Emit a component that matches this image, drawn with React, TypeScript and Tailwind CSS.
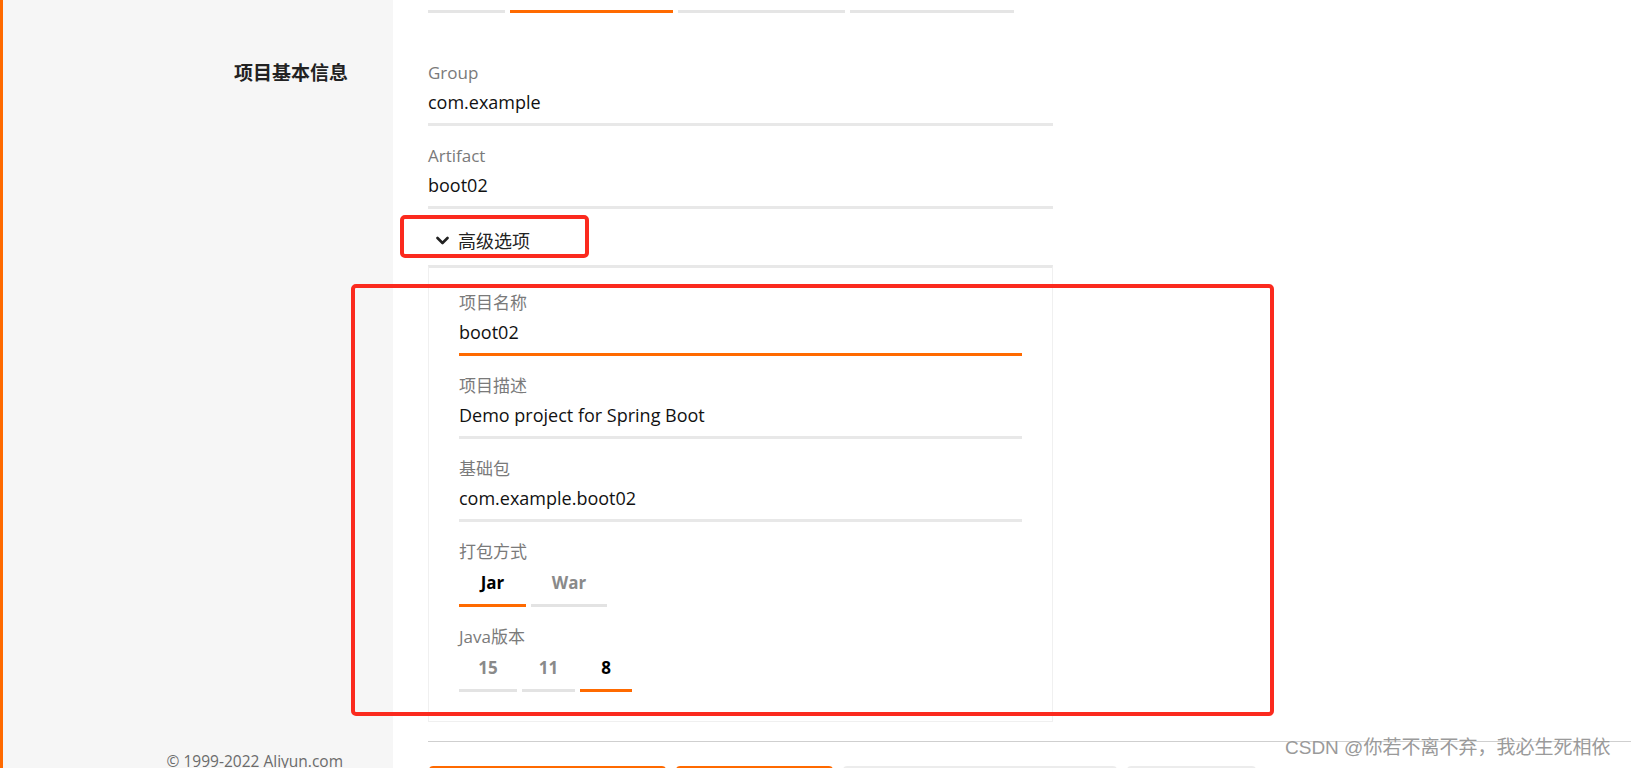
import React from "react";

const font = "font-['Open_Sans','Noto_Sans_CJK_SC',sans-serif]";

interface FieldProps {
  label: string;
  value: string;
  active?: boolean;
}

const Field = ({ label, value, active }: FieldProps) => (
  <div className="pt-[18px]">
    <div className="text-[17px] leading-[24px] text-[#7a7a7a]">{label}</div>
    <div
      className={`mt-[3px] border-b-[3px] pb-[7px] text-[18px] leading-[28px] text-[#111] ${
        active ? "border-[#ff6a00]" : "border-[#e8e8e8]"
      }`}
    >
      {value}
    </div>
  </div>
);

interface Choice {
  text: string;
  width: string;
  selected?: boolean;
}

const Choices = ({ label, items }: { label: string; items: Choice[] }) => (
  <div className="pt-[18px]">
    <div className="text-[17px] leading-[24px] text-[#7a7a7a]">{label}</div>
    <div className="mt-[7px] flex gap-[5px]">
      {items.map((c) => (
        <div
          key={c.text}
          className={`${c.width} border-b-[3px] pb-[9px] text-center text-[17px] leading-[24px] font-bold ${
            c.selected ? "border-[#ff6a00] text-black" : "border-[#e3e3e3] text-[#8a8a8a]"
          }`}
        >
          {c.text}
        </div>
      ))}
    </div>
  </div>
);

const App = () => {
  return (
    <div className={`relative flex h-[768px] w-[1631px] overflow-hidden bg-white ${font}`}>
      {/* left accent + sidebar */}
      <div className="w-[3px] shrink-0 bg-[#ff6a00]" />
      <div className="flex w-[390px] shrink-0 flex-col bg-[#f6f6f6] pr-[45px] text-right">
        <div className="pt-[60px] text-[19px] leading-[26px] font-bold text-[#222]">项目基本信息</div>
        <div className="mt-auto mb-[-4px] pr-[5px] text-[15.5px] leading-[22px] text-[#6b6b6b]">
          © 1999-2022 Aliyun.com
        </div>
      </div>

      {/* main form */}
      <div className="flex-1 pl-[35px]">
        <div className="w-[625px]">
          <div className="mt-[10px] flex gap-[5px]">
            <div className="h-[3px] w-[77px] bg-[#e5e5e5]" />
            <div className="h-[3px] w-[163px] bg-[#ff6a00]" />
            <div className="h-[3px] w-[167px] bg-[#e5e5e5]" />
            <div className="h-[3px] w-[164px] bg-[#e5e5e5]" />
          </div>

          <div className="mt-[30px]">
            <Field label="Group" value="com.example" />
            <Field label="Artifact" value="boot02" />
          </div>

          <div className="flex h-[56px] items-start gap-[9px] pt-[20px] pl-[8px]">
            <svg width="13" height="24" viewBox="0 0 13 24" className="shrink-0">
              <polyline
                points="1.5,9 6.5,14 11.5,9"
                fill="none"
                stroke="#222"
                strokeWidth="2.6"
                strokeLinecap="round"
                strokeLinejoin="round"
              />
            </svg>
            <span className="text-[18px] leading-[24px] text-[#222]">高级选项</span>
          </div>

          <div className="border-x border-b border-t-[3px] border-x-[#f0f0f0] border-b-[#f0f0f0] border-t-[#e8e8e8] px-[30px] pt-[5px] pb-[29px]">
            <Field label="项目名称" value="boot02" active />
            <Field label="项目描述" value="Demo project for Spring Boot" />
            <Field label="基础包" value="com.example.boot02" />
            <Choices
              label="打包方式"
              items={[
                { text: "Jar", width: "w-[67px]", selected: true },
                { text: "War", width: "w-[76px]" },
              ]}
            />
            <Choices
              label="Java版本"
              items={[
                { text: "15", width: "w-[58px]" },
                { text: "11", width: "w-[53px]" },
                { text: "8", width: "w-[52px]", selected: true },
              ]}
            />
          </div>
        </div>

        <div className="mt-[19px] h-px bg-[#cfcfcf]" />

        <div className="mt-[24px] flex gap-[10px] pl-px">
          <div className="h-[40px] w-[237px] rounded-[4px] bg-[#ff6a00]" />
          <div className="h-[40px] w-[157px] rounded-[4px] bg-[#ff6a00]" />
          <div className="h-[40px] w-[274px] rounded-[4px] bg-[#ececec]" />
          <div className="h-[40px] w-[129px] rounded-[4px] bg-[#ececec]" />
        </div>
      </div>

      {/* screenshot annotations */}
      <div className="pointer-events-none absolute top-[215px] left-[400px] h-[43px] w-[189px] rounded-[5px] border-4 border-[#fb2a1e]" />
      <div className="pointer-events-none absolute top-[284px] left-[351px] h-[432px] w-[923px] rounded-[5px] border-4 border-[#fb2a1e]" />
      <div className="pointer-events-none absolute top-[736px] left-[1285px] font-['Liberation_Sans','Noto_Sans_CJK_SC',sans-serif] text-[19px] leading-[24px] text-[#9a9a9a] [text-shadow:0_0_2px_#fff]">
        CSDN @你若不离不弃，我必生死相依
      </div>
    </div>
  );
};

export default App;
